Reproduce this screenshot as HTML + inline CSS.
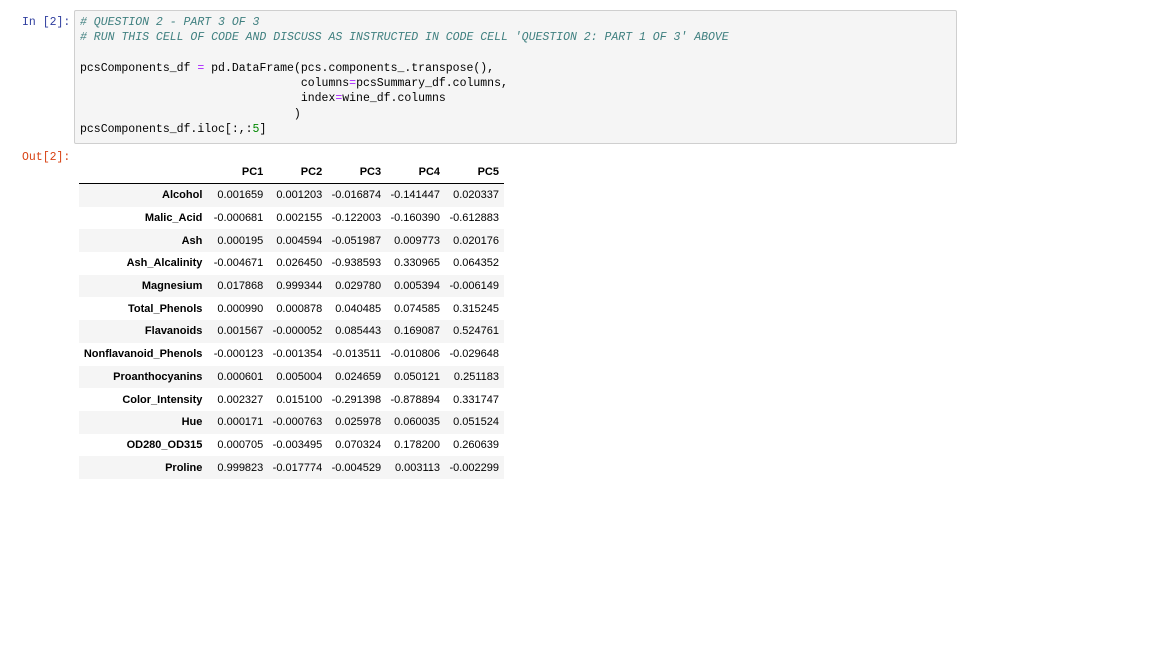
<!DOCTYPE html>
<html><head><meta charset="utf-8"><style>
body{margin:0;width:1152px;height:648px;background:#fff;position:relative;overflow:hidden;font-family:"Liberation Sans",Arial,sans-serif}
.p{position:absolute;font-family:"Liberation Mono",monospace;font-size:11.5px;line-height:15px}
.in{left:22px;top:15px;color:#303f9f}
.out{left:22px;top:150px;color:#d84315}
.box{position:absolute;left:74px;top:10px;width:881px;height:132px;background:#f5f5f5;border:1px solid #cfcfcf;border-radius:2px}
pre{margin:0;position:absolute;left:80px;top:15px;font-family:"Liberation Mono",monospace;font-size:11.5px;line-height:15.3px;color:#000}
.c{color:#408080;font-style:italic}.o{color:#aa22ff}.n{color:#080}
table{position:absolute;left:79px;top:161px;border-collapse:collapse;font-size:11px;width:425px}
th,td{text-align:right;padding:0 5px 0 4px;height:22.7px;white-space:nowrap}
thead th{height:22px;border-bottom:1px solid #000;vertical-align:middle}
tbody th{font-weight:bold;padding-right:7px}
tbody tr:nth-child(odd){background:#f5f5f5}
</style></head><body>
<div class="p in">In [2]:</div>
<div class="box"></div>
<pre><span class="c"># QUESTION 2 - PART 3 OF 3
# RUN THIS CELL OF CODE AND DISCUSS AS INSTRUCTED IN CODE CELL 'QUESTION 2: PART 1 OF 3' ABOVE</span>

pcsComponents_df <span class="o">=</span> pd.DataFrame(pcs.components_.transpose(),
                                columns<span class="o">=</span>pcsSummary_df.columns,
                                index<span class="o">=</span>wine_df.columns
                               )
pcsComponents_df.iloc[:,:<span class="n">5</span>]</pre>
<div class="p out">Out[2]:</div>
<table>
<thead><tr><th></th><th>PC1</th><th>PC2</th><th>PC3</th><th>PC4</th><th>PC5</th></tr></thead>
<tbody>
<tr><th>Alcohol</th><td>0.001659</td><td>0.001203</td><td>-0.016874</td><td>-0.141447</td><td>0.020337</td></tr>
<tr><th>Malic_Acid</th><td>-0.000681</td><td>0.002155</td><td>-0.122003</td><td>-0.160390</td><td>-0.612883</td></tr>
<tr><th>Ash</th><td>0.000195</td><td>0.004594</td><td>-0.051987</td><td>0.009773</td><td>0.020176</td></tr>
<tr><th>Ash_Alcalinity</th><td>-0.004671</td><td>0.026450</td><td>-0.938593</td><td>0.330965</td><td>0.064352</td></tr>
<tr><th>Magnesium</th><td>0.017868</td><td>0.999344</td><td>0.029780</td><td>0.005394</td><td>-0.006149</td></tr>
<tr><th>Total_Phenols</th><td>0.000990</td><td>0.000878</td><td>0.040485</td><td>0.074585</td><td>0.315245</td></tr>
<tr><th>Flavanoids</th><td>0.001567</td><td>-0.000052</td><td>0.085443</td><td>0.169087</td><td>0.524761</td></tr>
<tr><th>Nonflavanoid_Phenols</th><td>-0.000123</td><td>-0.001354</td><td>-0.013511</td><td>-0.010806</td><td>-0.029648</td></tr>
<tr><th>Proanthocyanins</th><td>0.000601</td><td>0.005004</td><td>0.024659</td><td>0.050121</td><td>0.251183</td></tr>
<tr><th>Color_Intensity</th><td>0.002327</td><td>0.015100</td><td>-0.291398</td><td>-0.878894</td><td>0.331747</td></tr>
<tr><th>Hue</th><td>0.000171</td><td>-0.000763</td><td>0.025978</td><td>0.060035</td><td>0.051524</td></tr>
<tr><th>OD280_OD315</th><td>0.000705</td><td>-0.003495</td><td>0.070324</td><td>0.178200</td><td>0.260639</td></tr>
<tr><th>Proline</th><td>0.999823</td><td>-0.017774</td><td>-0.004529</td><td>0.003113</td><td>-0.002299</td></tr>
</tbody></table>
</body></html>
